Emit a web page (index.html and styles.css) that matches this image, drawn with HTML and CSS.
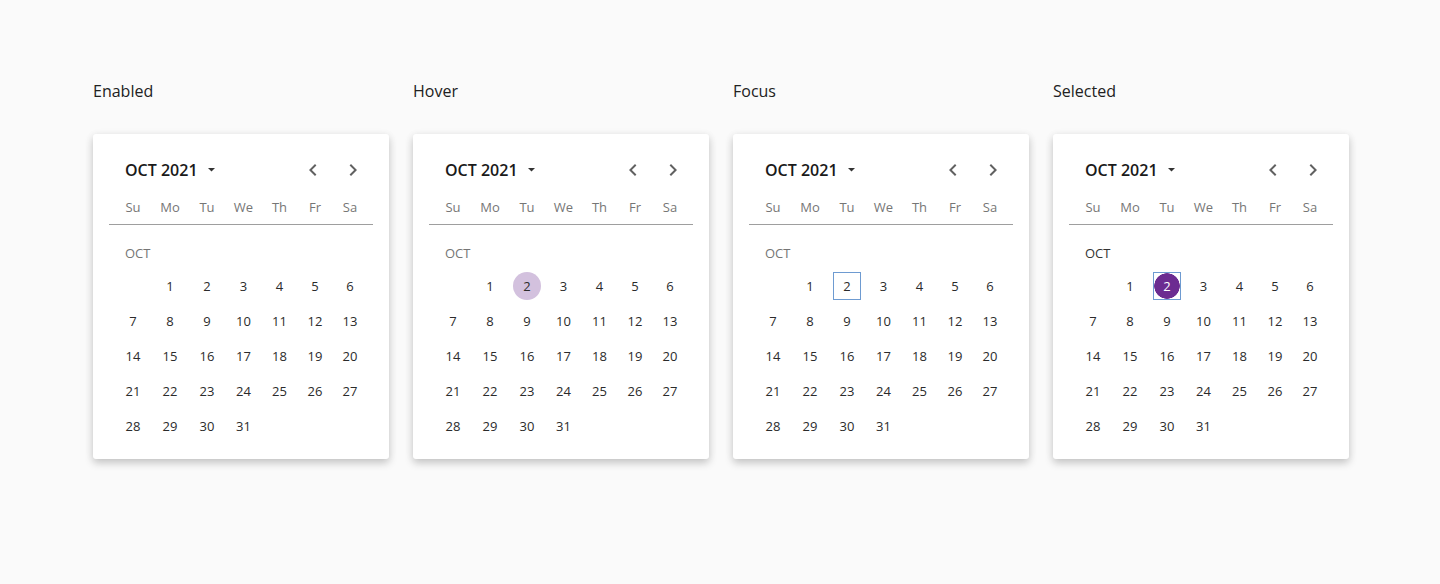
FILE: index.html
```html
<!DOCTYPE html>
<html lang="en">
  <head>
    <meta charset="UTF-8" />
    <meta name="viewport" content="width=device-width, initial-scale=1.0" />
    <link rel="stylesheet" href="styles.css">
    <title>Date picker states</title>
  </head>
  <body>

    <section class="states">

      <div class="state">
        <h3 class="state-label">Enabled</h3>
        <div class="calendar">
          <div class="cal-header">
            <button class="period-button">OCT 2021
              <svg class="caret" width="7" height="4" viewBox="0 0 7 4"><path d="M0 0h7L3.5 3.5z" /></svg>
            </button>
            <div class="nav">
              <button class="nav-button"><svg width="24" height="24" viewBox="0 0 24 24"><path d="M15.41 7.41L14 6l-6 6 6 6 1.41-1.41L10.83 12z" /></svg></button>
              <button class="nav-button"><svg width="24" height="24" viewBox="0 0 24 24"><path d="M8.59 16.59L10 18l6-6-6-6-1.41 1.41L13.17 12z" /></svg></button>
            </div>
          </div>
          <div class="weekdays"><span>Su</span><span>Mo</span><span>Tu</span><span>We</span><span>Th</span><span>Fr</span><span>Sa</span></div>
          <div class="month-label">OCT</div>
          <div class="days" data-mark=""></div>
        </div>
      </div>

      <div class="state">
        <h3 class="state-label">Hover</h3>
        <div class="calendar">
          <div class="cal-header">
            <button class="period-button">OCT 2021
              <svg class="caret" width="7" height="4" viewBox="0 0 7 4"><path d="M0 0h7L3.5 3.5z" /></svg>
            </button>
            <div class="nav">
              <button class="nav-button"><svg width="24" height="24" viewBox="0 0 24 24"><path d="M15.41 7.41L14 6l-6 6 6 6 1.41-1.41L10.83 12z" /></svg></button>
              <button class="nav-button"><svg width="24" height="24" viewBox="0 0 24 24"><path d="M8.59 16.59L10 18l6-6-6-6-1.41 1.41L13.17 12z" /></svg></button>
            </div>
          </div>
          <div class="weekdays"><span>Su</span><span>Mo</span><span>Tu</span><span>We</span><span>Th</span><span>Fr</span><span>Sa</span></div>
          <div class="month-label">OCT</div>
          <div class="days" data-mark="hover"></div>
        </div>
      </div>

      <div class="state">
        <h3 class="state-label">Focus</h3>
        <div class="calendar">
          <div class="cal-header">
            <button class="period-button">OCT 2021
              <svg class="caret" width="7" height="4" viewBox="0 0 7 4"><path d="M0 0h7L3.5 3.5z" /></svg>
            </button>
            <div class="nav">
              <button class="nav-button"><svg width="24" height="24" viewBox="0 0 24 24"><path d="M15.41 7.41L14 6l-6 6 6 6 1.41-1.41L10.83 12z" /></svg></button>
              <button class="nav-button"><svg width="24" height="24" viewBox="0 0 24 24"><path d="M8.59 16.59L10 18l6-6-6-6-1.41 1.41L13.17 12z" /></svg></button>
            </div>
          </div>
          <div class="weekdays"><span>Su</span><span>Mo</span><span>Tu</span><span>We</span><span>Th</span><span>Fr</span><span>Sa</span></div>
          <div class="month-label">OCT</div>
          <div class="days" data-mark="focus"></div>
        </div>
      </div>

      <div class="state">
        <h3 class="state-label">Selected</h3>
        <div class="calendar">
          <div class="cal-header">
            <button class="period-button">OCT 2021
              <svg class="caret" width="7" height="4" viewBox="0 0 7 4"><path d="M0 0h7L3.5 3.5z" /></svg>
            </button>
            <div class="nav">
              <button class="nav-button"><svg width="24" height="24" viewBox="0 0 24 24"><path d="M15.41 7.41L14 6l-6 6 6 6 1.41-1.41L10.83 12z" /></svg></button>
              <button class="nav-button"><svg width="24" height="24" viewBox="0 0 24 24"><path d="M8.59 16.59L10 18l6-6-6-6-1.41 1.41L13.17 12z" /></svg></button>
            </div>
          </div>
          <div class="weekdays"><span>Su</span><span>Mo</span><span>Tu</span><span>We</span><span>Th</span><span>Fr</span><span>Sa</span></div>
          <div class="month-label month-label--active">OCT</div>
          <div class="days" data-mark="selected"></div>
        </div>
      </div>

    </section>

    <script>
      // Fill every month grid: October starts on a Monday here
      document.querySelectorAll(".days").forEach(function (grid) {
        const mark = grid.dataset.mark;
        let html = '<span class="cell"></span>';
        for (let d = 1; d <= 31; d++) {
          const extra = d === 2 && mark ? " day--" + mark : "";
          html += `<span class="cell"><span class="day${extra}">${d}</span></span>`;
        }
        grid.innerHTML = html;
      });
    </script>
  </body>
</html>
```

FILE: styles.css
```css
body {
  margin: 0;
  min-height: 100vh;
  background-color: #fafafa;
  font-family: "Open Sans", "Noto Sans", sans-serif;
  color: #212121;
}

button {
  border: none;
  background: none;
  padding: 0;
  font: inherit;
  color: inherit;
  cursor: pointer;
}

.states {
  display: flex;
  gap: 24px;
  padding: 79px 0 0 93px;
}

.state-label {
  margin: 0 0 31px;
  font-size: 16px;
  font-weight: 400;
  line-height: 24px;
  color: #212121;
}

.calendar {
  width: 296px;
  box-sizing: border-box;
  padding: 16px 16px 16px;
  background-color: #fff;
  border-radius: 3px;
  box-shadow: 0 4px 9px rgba(0, 0, 0, 0.2), 0 1px 10px rgba(0, 0, 0, 0.05);
}

.cal-header {
  display: flex;
  align-items: center;
  justify-content: space-between;
  height: 40px;
}

.period-button {
  display: flex;
  align-items: center;
  gap: 10px;
  padding-left: 16px;
  font-size: 16px;
  font-weight: 600;
  color: #1a1a1a;
}

.caret {
  fill: #333;
}

.nav {
  display: flex;
}

.nav-button {
  width: 40px;
  height: 40px;
  display: flex;
  align-items: center;
  justify-content: center;
  fill: #616161;
}

.weekdays,
.days {
  display: grid;
  grid-template-columns: 37px 37px 37px 36px 36px 35px 35px;
  justify-content: center;
}

.weekdays {
  height: 34px;
  line-height: 34px;
  border-bottom: 1px solid #9e9e9e;
  font-size: 13px;
  color: #767676;
  text-align: center;
}

.month-label {
  margin-top: 12px;
  height: 31px;
  line-height: 32px;
  padding-left: 16px;
  font-size: 13px;
  color: #757575;
}

.month-label--active {
  color: #333;
}

.days {
  grid-auto-rows: 35px;
}

.cell {
  display: flex;
  align-items: center;
  justify-content: center;
}

.day {
  width: 28px;
  height: 28px;
  box-sizing: border-box;
  border: 1px solid transparent;
  display: flex;
  align-items: center;
  justify-content: center;
  font-size: 13px;
  color: #2b2b2b;
}

.day--hover {
  border-radius: 50%;
  background-color: #d3c1de;
}

.day--focus {
  border-color: #6e9bd1;
}

.day--selected {
  border-color: #6e9bd1;
  background: radial-gradient(circle closest-side, #6c2c91 96%, transparent 100%);
  color: #fff;
}
```
